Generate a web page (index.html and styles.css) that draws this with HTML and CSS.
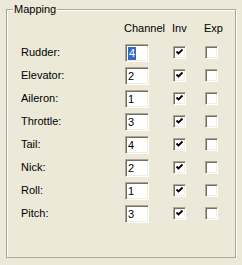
FILE: index.html
```html
<!DOCTYPE html>
<html lang="en">
<head>
  <meta charset="UTF-8"/>
  <title>Mapping</title>
  <link rel="stylesheet" href="styles.css">
</head>
<body>

  <!-- Mapping group box -->
  <div class="group">
    <span class="group-title">Mapping</span>

    <div class="grid">
      <span></span>
      <span class="head">Channel</span>
      <span class="head">Inv</span>
      <span class="head">Exp</span>

      <span class="label">Rudder:</span>
      <span class="field"><span class="sel">4</span></span>
      <span class="check on"><svg viewBox="0 0 9 9"><path d="M1.5 3.5 L3.5 5.5 L7.5 1.5"/></svg></span>
      <span class="check"></span>

      <span class="label">Elevator:</span>
      <span class="field">2</span>
      <span class="check on"><svg viewBox="0 0 9 9"><path d="M1.5 3.5 L3.5 5.5 L7.5 1.5"/></svg></span>
      <span class="check"></span>

      <span class="label">Aileron:</span>
      <span class="field">1</span>
      <span class="check on"><svg viewBox="0 0 9 9"><path d="M1.5 3.5 L3.5 5.5 L7.5 1.5"/></svg></span>
      <span class="check"></span>

      <span class="label">Throttle:</span>
      <span class="field">3</span>
      <span class="check on"><svg viewBox="0 0 9 9"><path d="M1.5 3.5 L3.5 5.5 L7.5 1.5"/></svg></span>
      <span class="check"></span>

      <span class="label">Tail:</span>
      <span class="field">4</span>
      <span class="check on"><svg viewBox="0 0 9 9"><path d="M1.5 3.5 L3.5 5.5 L7.5 1.5"/></svg></span>
      <span class="check"></span>

      <span class="label">Nick:</span>
      <span class="field">2</span>
      <span class="check on"><svg viewBox="0 0 9 9"><path d="M1.5 3.5 L3.5 5.5 L7.5 1.5"/></svg></span>
      <span class="check"></span>

      <span class="label">Roll:</span>
      <span class="field">1</span>
      <span class="check on"><svg viewBox="0 0 9 9"><path d="M1.5 3.5 L3.5 5.5 L7.5 1.5"/></svg></span>
      <span class="check"></span>

      <span class="label">Pitch:</span>
      <span class="field">3</span>
      <span class="check on"><svg viewBox="0 0 9 9"><path d="M1.5 3.5 L3.5 5.5 L7.5 1.5"/></svg></span>
      <span class="check"></span>
    </div>
  </div>

</body>
</html>
```

FILE: styles.css
```css
* {
  box-sizing: border-box;
}

body {
  margin: 0;
  background-color: #ece9d8;
  font-family: 'Liberation Sans', Arial, sans-serif;
  font-size: 11px;
  color: #000;
}

.group {
  position: relative;
  margin: 9px 0 0 6px;
  width: 230px;
  height: 249px;
  border: 1px solid #aca899;
  box-shadow: inset 1px 1px 0 #fff, 1px 1px 0 #fff;
}

.group-title {
  position: absolute;
  left: 6px;
  top: -7px;
  padding: 0 1px;
  line-height: 13px;
  background-color: #ece9d8;
}

.grid {
  display: grid;
  grid-template-columns: 103px 48px 32px 1fr;
  grid-template-rows: 20px;
  grid-auto-rows: 23px;
  align-items: start;
  padding: 12px 0 0 14px;
}

.head,
.label {
  line-height: 13px;
}

.label {
  margin-top: 4px;
}

.field {
  width: 24px;
  height: 18px;
  margin: 2px 0 0 1px;
  padding: 2px 0 0 2px;
  line-height: 13px;
  background-color: #fff;
  border: 1px solid;
  border-color: #aca899 #fff #fff #aca899;
  box-shadow: inset 1px 1px 0 #716f64, inset -1px -1px 0 #f1efe2;
}

.sel {
  display: inline-block;
  padding: 0 1px;
  background-color: #316ac5;
  color: #fff;
}

.check {
  width: 13px;
  height: 13px;
  margin: 4px 0 0 1px;
  padding: 1px;
  background-color: #fff;
  border: 1px solid;
  border-color: #aca899 #fff #fff #aca899;
  box-shadow: inset 1px 1px 0 #716f64, inset -1px -1px 0 #f1efe2;
}

.check svg {
  display: block;
  width: 9px;
  height: 9px;
}

.check path {
  fill: none;
  stroke: #000;
  stroke-width: 1.8;
}
```
